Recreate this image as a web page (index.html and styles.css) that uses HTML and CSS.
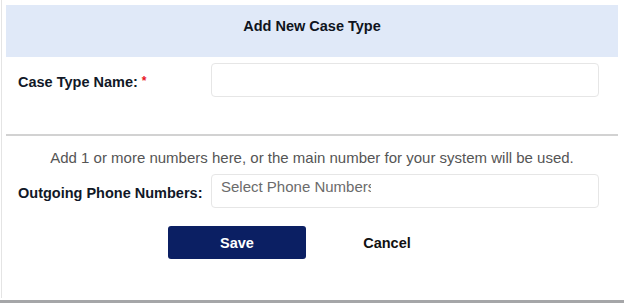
FILE: index.html
```html
<!DOCTYPE html>
<html>
<head>
<meta charset="utf-8">
<link rel="stylesheet" href="styles.css">
</head>
<body>
<div class="page">
  <div class="frame">
    <div class="header">Add New Case Type</div>
    <div class="row row-first">
      <label class="label">Case Type Name: <span class="req">*</span></label>
      <div class="input"></div>
    </div>
    <div class="sep"></div>
    <p class="help">Add 1 or more numbers here, or the main number for your system will be used.</p>
    <div class="row row-second">
      <label class="label">Outgoing Phone Numbers:</label>
      <div class="input select"><span class="placeholder">Select Phone Numbers</span></div>
    </div>
    <div class="actions">
      <button class="btn btn-save">Save</button>
      <button class="btn btn-cancel">Cancel</button>
    </div>
  </div>
</div>
</body>
</html>
```
FILE: styles.css
```css
html, body {
  margin: 0;
  padding: 0;
  background: #fff;
}
body {
  font-family: "Liberation Sans", Arial, Helvetica, sans-serif;
  width: 624px;
  height: 303px;
  overflow: hidden;
}
.page {
  height: 300px;
  border-bottom: 3px solid #a5a6a8;
}
.frame {
  margin-left: 1px;
  border-left: 1px solid #e4e4e4;
  height: 298px;
  padding: 5px 6px 0 4px;
  box-sizing: border-box;
}
.header {
  height: 52px;
  box-sizing: border-box;
  padding-top: 11px;
  line-height: 20px;
  background: #e0e9f8;
  text-align: center;
  font-weight: bold;
  font-size: 14.5px;
  color: #0f1420;
}
.row {
  display: flex;
  align-items: center;
  padding-left: 12px;
}
.row-first {
  margin-top: 6px;
}
.row-second {
  margin-top: 8px;
}
.label {
  width: 193px;
  flex: none;
  font-weight: bold;
  font-size: 14.5px;
  color: #111827;
  padding-top: 4px;
}
.req {
  color: #e8141e;
  font-size: 12px;
  vertical-align: 2px;
}
.input {
  width: 388px;
  height: 34px;
  box-sizing: border-box;
  border: 1px solid #e6e6e6;
  border-radius: 4px;
  background: #fff;
}
.select {
  padding: 3px 0 0 9px;
}
.placeholder {
  display: block;
  width: 150px;
  overflow: hidden;
  white-space: nowrap;
  font-size: 15px;
  line-height: 17px;
  color: #6b6b6b;
}
.sep {
  margin-top: 37px;
  border-top: 2px solid #d2d2d2;
}
.help {
  margin: 14px 0 0 0;
  text-align: center;
  font-size: 15px;
  line-height: 16px;
  color: #555;
}
.actions {
  display: flex;
  justify-content: center;
  gap: 12px;
  margin-top: 18px;
}
.btn {
  width: 138px;
  height: 33px;
  border: none;
  border-radius: 3px;
  font-family: "Liberation Sans", Arial, sans-serif;
  font-weight: bold;
  font-size: 14.5px;
  padding: 0;
  cursor: pointer;
}
.btn-save {
  background: #0b1f63;
  color: #fff;
}
.btn-cancel {
  background: transparent;
  color: #111;
}
```
